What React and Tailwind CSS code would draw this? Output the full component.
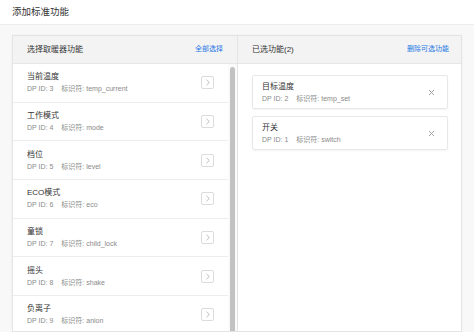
const font = { fontFamily: '"Liberation Sans", "Noto Sans CJK SC", sans-serif' };

const heaterFeatures = [
    { name: '当前温度', id: 3, code: 'temp_current' },
    { name: '工作模式', id: 4, code: 'mode' },
    { name: '档位', id: 5, code: 'level' },
    { name: 'ECO模式', id: 6, code: 'eco' },
    { name: '童锁', id: 7, code: 'child_lock' },
    { name: '摇头', id: 8, code: 'shake' },
    { name: '负离子', id: 9, code: 'anion' },
];

const selectedFeatures = [
    { name: '目标温度', id: 2, code: 'temp_set' },
    { name: '开关', id: 1, code: 'switch' },
];

const Meta = ({ id, code }) => (
    <div className="text-[7px] leading-[9px] text-[#8a8a8a] mt-[2px] whitespace-nowrap">
        DP ID: {id}
        <span className="ml-[8px]">标识符: {code}</span>
    </div>
);

const App = () => {
    return (
        <div className="w-[474px] h-[332px] overflow-hidden bg-[#f8f8f8] flex flex-col" style={font}>
            {/* Page header */}
            <div className="h-[25px] shrink-0 bg-white border-b border-[#ececec] flex items-center px-[12px]">
                <h1 className="text-[9.5px] text-[#333]">添加标准功能</h1>
            </div>

            <div className="flex-1 min-h-0 pt-[10px] px-[12px]">
                <div className="h-full flex bg-white border border-[#e4e4e4] shadow-[0_0_2px_rgba(0,0,0,0.06)]">
                    {/* Left: all heater features */}
                    <div className="w-[224px] flex flex-col">
                        <div className="h-[28px] shrink-0 bg-[#f3f3f3] border-b border-[#e6e6e6] flex items-center justify-between pl-[14px] pr-[14px]">
                            <span className="text-[8px] text-[#333]">选择取暖器功能</span>
                            <span className="text-[7px] text-[#1f78e6]">全部选择</span>
                        </div>
                        <div className="flex-1 min-h-0 flex">
                            <ul className="flex-1 min-w-0">
                                {heaterFeatures.map(f => (
                                    <li key={f.id} className="h-[38.7px] border-b border-[#ededed] flex items-center justify-between pl-[14px] pr-[14px]">
                                        <div>
                                            <div className="text-[8px] leading-[10px] text-[#333]">{f.name}</div>
                                            <Meta id={f.id} code={f.code} />
                                        </div>
                                        <span className="w-[13px] h-[13px] border border-[#dcdcdc] rounded-[2px] flex items-center justify-center text-[#b5b5b5]">
                                            <svg width="6" height="7" viewBox="0 0 6 7" fill="none">
                                                <path d="M1.5 0.8 L4.3 3.5 L1.5 6.2" stroke="currentColor" strokeWidth="0.9" />
                                            </svg>
                                        </span>
                                    </li>
                                ))}
                            </ul>
                            {/* scrollbar */}
                            <div className="w-[9px] shrink-0 pt-[3px] flex justify-center bg-[#fafafa]">
                                <div className="w-[5px] h-full bg-[#c2c2c2] rounded-t-[3px]"></div>
                            </div>
                        </div>
                    </div>

                    {/* Right: selected features */}
                    <div className="flex-1 flex flex-col border-l border-[#e4e4e4]">
                        <div className="h-[28px] shrink-0 bg-[#f3f3f3] border-b border-[#e6e6e6] flex items-center justify-between pl-[14px] pr-[12px]">
                            <span className="text-[8px] text-[#333]">已选功能(2)</span>
                            <span className="text-[7px] text-[#1f78e6]">删除可选功能</span>
                        </div>
                        <div className="flex flex-col gap-[7px] pt-[11px] pl-[14px] pr-[13px]">
                            {selectedFeatures.map(f => (
                                <div key={f.id} className="h-[34px] border border-[#e8e8e8] rounded-[2px] shadow-[0_1px_2px_rgba(0,0,0,0.05)] flex items-center justify-between pl-[9px] pr-[12px]">
                                    <div>
                                        <div className="text-[8px] leading-[10px] text-[#333]">{f.name}</div>
                                        <Meta id={f.id} code={f.code} />
                                    </div>
                                    <svg width="7" height="7" viewBox="0 0 7 7" className="text-[#9a9a9a]">
                                        <path d="M1 1 L6 6 M6 1 L1 6" stroke="currentColor" strokeWidth="0.9" />
                                    </svg>
                                </div>
                            ))}
                        </div>
                    </div>
                </div>
            </div>
        </div>
    );
};

export default App;
